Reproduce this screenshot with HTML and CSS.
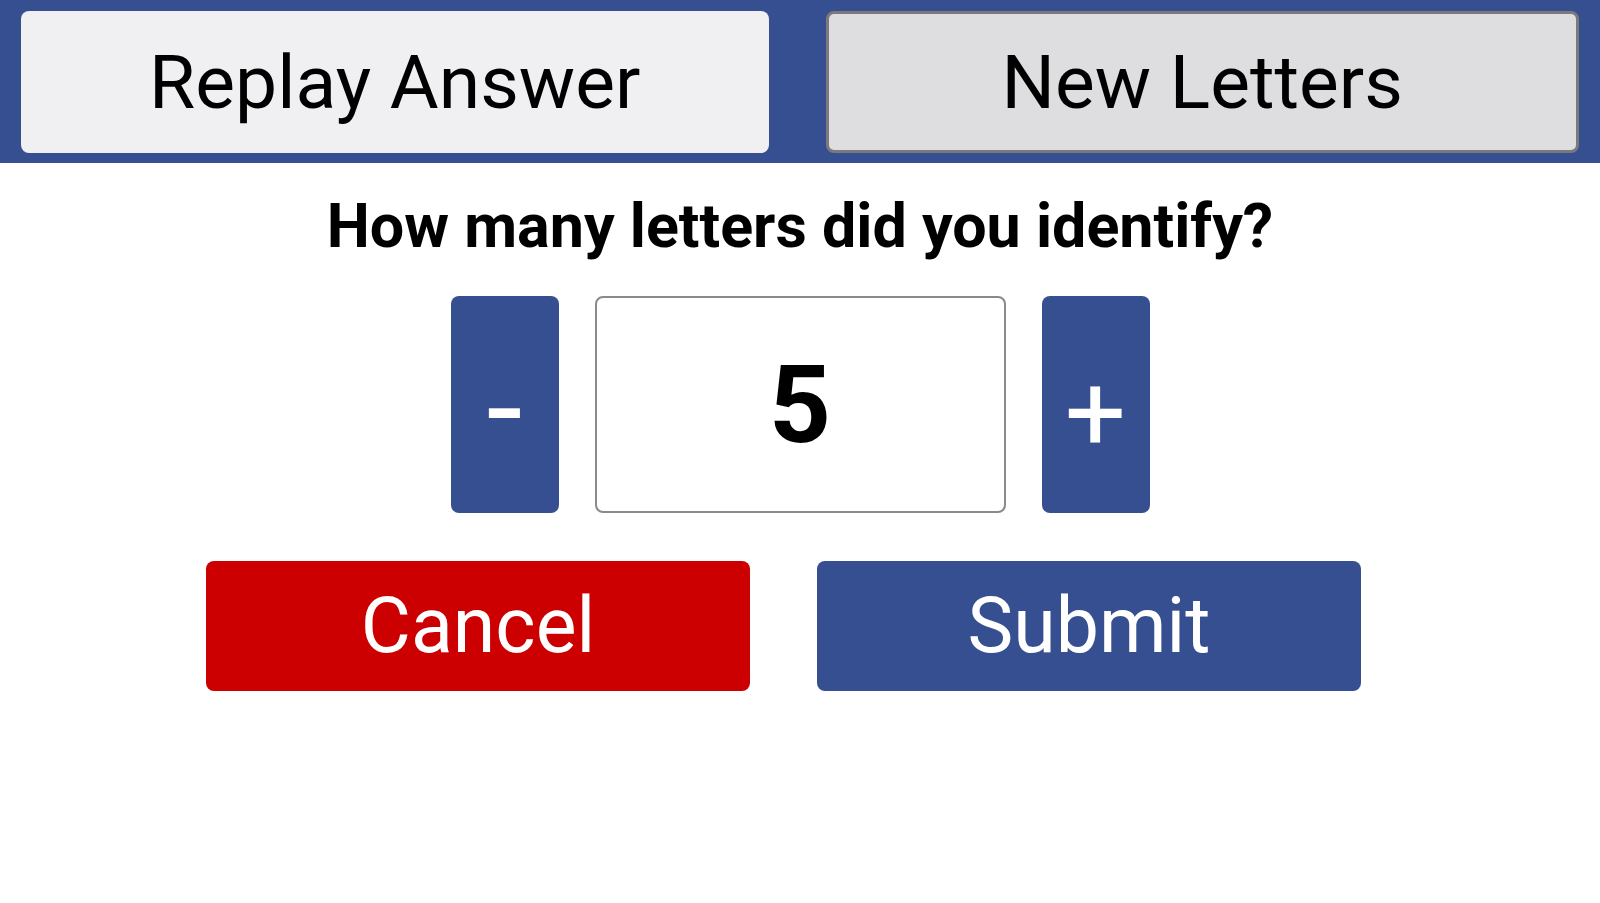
FILE: index.html
```html
<!DOCTYPE html>
<html lang="en">
<head>
    <meta charset="UTF-8">
    <meta name="viewport" content="width=device-width, initial-scale=1.0">
    <title>Letter Count</title>
    <link rel="stylesheet" href="styles.css">
</head>
<body>

<header class="top-bar">
    <button class="top-button replay">Replay Answer</button>
    <button class="top-button new-letters">New Letters</button>
</header>

<div class="container">
    <h2 class="question">How many letters did you identify?</h2>

    <div class="stepper">
        <button class="step minus">-</button>
        <div class="count">5</div>
        <button class="step plus">+</button>
    </div>

    <div class="actions">
        <button class="action cancel">Cancel</button>
        <button class="action submit">Submit</button>
    </div>
</div>

</body>
</html>
```

FILE: styles.css
```css
body {
    font-family: Roboto, "Liberation Sans", Arial, sans-serif;
    margin: 0;
    padding: 0;
    background-color: #fff;
    color: #000;
}
button {
    font-family: inherit;
    cursor: pointer;
}
.top-bar {
    background-color: #364f90;
    display: flex;
    gap: 57px;
    padding: 11px 21px 10px;
}
.top-button {
    flex: 1;
    height: 142px;
    border-radius: 8px;
    font-size: 75px;
    color: #000;
    padding: 0;
}
.top-button.replay {
    background-color: #f0eff1;
    border: none;
}
.top-button.new-letters {
    background-color: #dedddf;
    border: 3px solid #7a7a7c;
}
.container {
    text-align: center;
}
.question {
    margin: 28px 0 35px;
    font-size: 61px;
    line-height: 70px;
    font-weight: bold;
}
.stepper {
    display: flex;
    justify-content: center;
    gap: 36px;
    height: 217px;
}
.step {
    width: 108px;
    background-color: #364f90;
    border: none;
    border-radius: 8px;
    color: #fff;
    line-height: 1;
    padding: 0;
}
.step.minus {
    font-size: 130px;
    padding-top: 6px;
}
.step.plus {
    font-size: 108px;
    padding-top: 16px;
}
.count {
    width: 407px;
    border: 2px solid #8a8a8a;
    border-radius: 8px;
    display: flex;
    align-items: center;
    justify-content: center;
    font-size: 108px;
    font-weight: bold;
}
.actions {
    display: flex;
    gap: 67px;
    margin-top: 48px;
    padding-left: 206px;
}
.action {
    width: 544px;
    height: 130px;
    border: none;
    border-radius: 8px;
    color: #fff;
    font-size: 77px;
    padding: 0;
}
.action.cancel {
    background-color: #cc0000;
}
.action.submit {
    background-color: #364f90;
}
```
